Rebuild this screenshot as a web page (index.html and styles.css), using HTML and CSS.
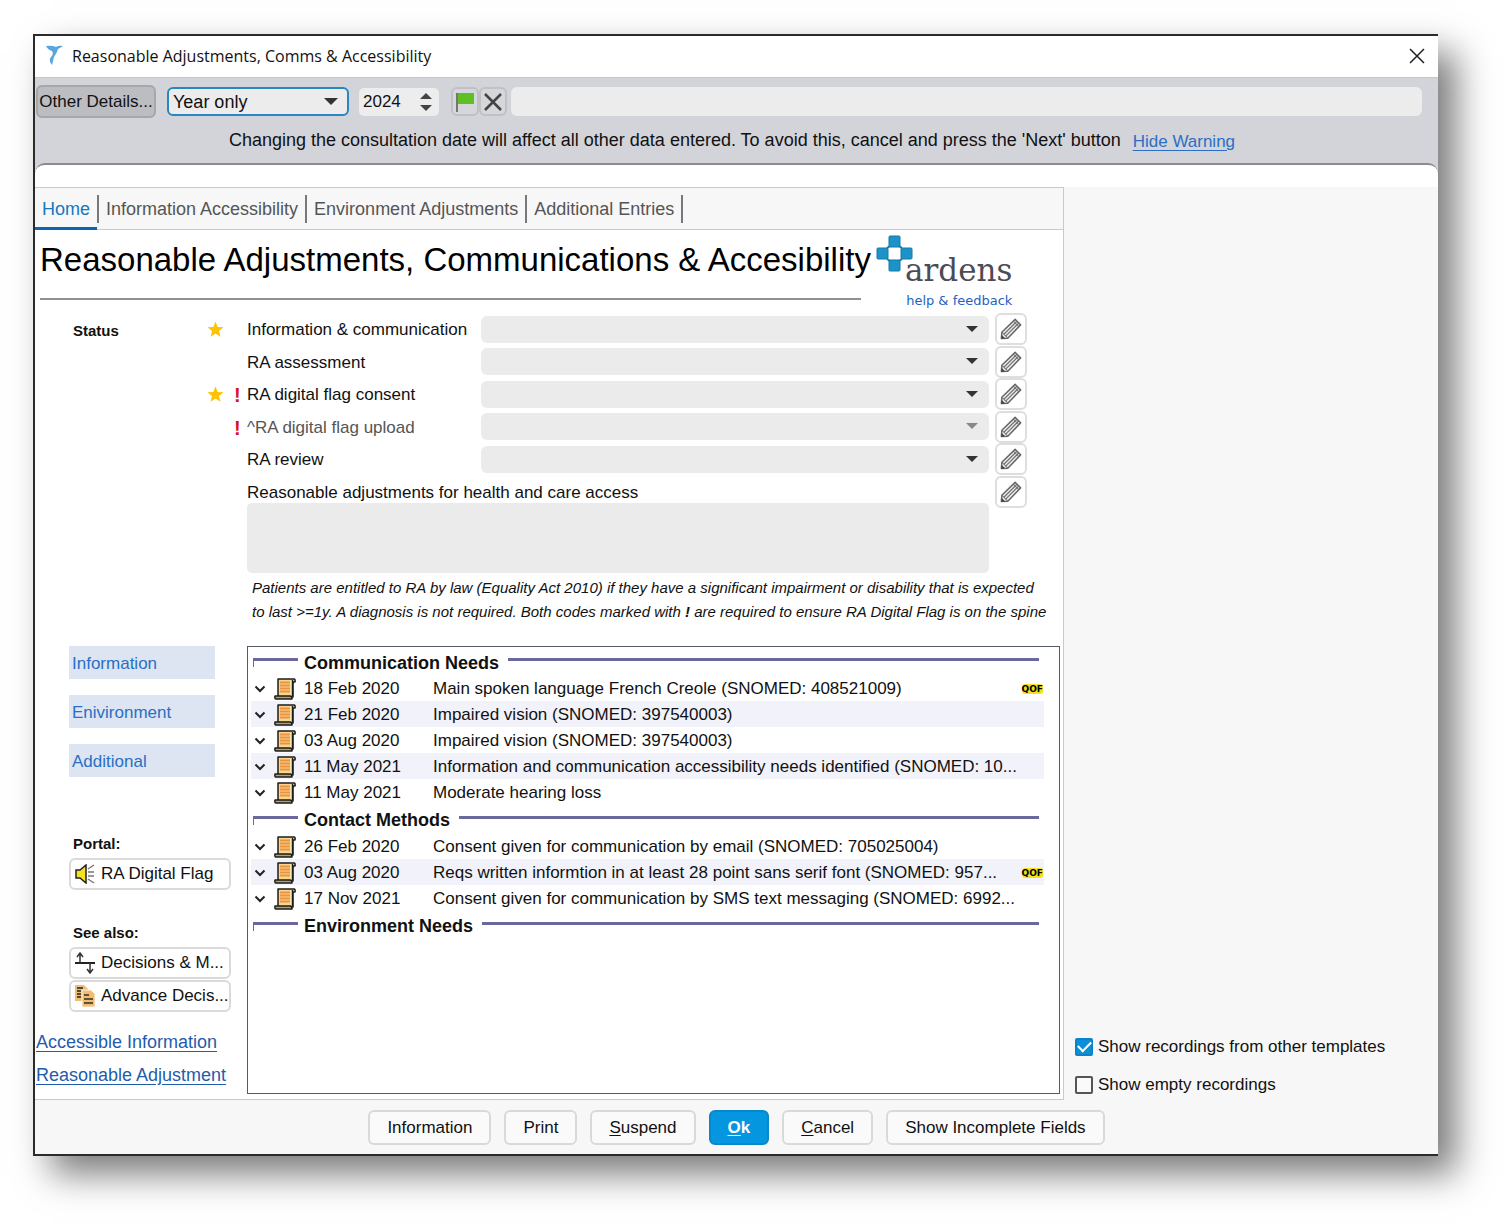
FILE: index.html
```html
<!doctype html>
<html lang="en">
<head>
<title>Reasonable Adjustments, Comms &amp; Accessibility</title>
<meta charset="utf-8">
<meta name="viewport" content="width=device-width, initial-scale=1">
<link rel="stylesheet" href="styles.css">
</head>
<body>

<!-- shared icons -->
<svg class="defs" width="0" height="0" aria-hidden="true">
	<symbol id="pencil" viewBox="0 0 24 24">
		<path d="M1.500 22.500 L2 15.500 L16.500 1.500 L22.500 7.500 L8.500 22 Z" fill="#f0f0f0" stroke="#666" stroke-width="1.600" stroke-linejoin="round"/>
		<path d="M4.500 17.500 L18.500 3.500 M6.500 19.500 L20.500 5.500" fill="none" stroke="#777" stroke-width="1.500"/>
		<path d="M2 15.500 L8.500 22 M14.500 3.500 L20.500 9.500" fill="none" stroke="#777" stroke-width="1.200"/>
		<path d="M1.500 22.500 L2 18.500 L5.500 22 Z" fill="#444"/>
	</symbol>
	<symbol id="star" viewBox="0 0 18 18">
		<path d="M9 0.500 L11.300 6.300 L17.500 6.700 L12.700 10.600 L14.300 16.700 L9 13.300 L3.700 16.700 L5.300 10.600 L0.500 6.700 L6.700 6.300 Z" fill="#fcc203"/>
	</symbol>
	<symbol id="chev" viewBox="0 0 12 8">
		<path d="M1.500 1.500 L6 6 L10.500 1.500" fill="none" stroke="#222" stroke-width="2"/>
	</symbol>
	<symbol id="scroll" viewBox="0 0 22 22">
		<path d="M4 1 H20 Q21.500 1 21 4 H19 V19 H4 Z" fill="#f6d58c" stroke="#1c1c1c" stroke-width="1.500" stroke-linejoin="round"/>
		<path d="M1 18 H16 Q18 18 18 21 H2 Q0.500 21 1 18 Z" fill="#b8a261" stroke="#1c1c1c" stroke-width="1.500" stroke-linejoin="round"/>
		<path d="M6 4.500 H16 M6 7.500 H16 M6 10.500 H16 M6 13.500 H16" stroke="#ee9140" stroke-width="1.800"/>
		<path d="M18.500 2 V18" stroke="#1c1c1c" stroke-width="1.300"/>
		<path d="M16.500 2.500 V17" stroke="#f9e6ad" stroke-width="1"/>
	</symbol>
</svg>

<main class="window">

	<header class="titlebar">
		<svg width="19" height="21" viewBox="0 0 19 21" aria-hidden="true">
			<path d="M1 1 Q7 0 11 2 Q14 0 18 1 Q15 3 13 4 Q12 8 9 12 Q8 16 7 20 Q3 15 6 12 Q9 9 7 6 Q3 5 1 1 Z" fill="#5aa5de"/>
		</svg>
		<span class="caption">Reasonable Adjustments, Comms &amp; Accessibility</span>
		<button class="close" aria-label="Close">
			<svg width="16" height="16" viewBox="0 0 16 16"><path d="M1 1 L15 15 M15 1 L1 15" stroke="#222" stroke-width="1.500"/></svg>
		</button>
	</header>

	<section class="toolbar">
		<div class="tools">
			<button class="details">Other Details...</button>
			<div class="combo dateType">
				<select aria-label="Date precision"><option>Year only</option></select>
			</div>
			<div class="spinner">
				<input type="text" value="2024" aria-label="Year">
				<div class="arrows">
					<button class="up" aria-label="Year up"></button>
					<button class="down" aria-label="Year down"></button>
				</div>
			</div>
			<div class="pair">
				<button class="tool" aria-label="Flag">
					<svg width="20" height="22" viewBox="0 0 20 22"><path d="M2 2 V21" stroke="#555" stroke-width="1.500"/><rect x="3" y="2" width="16" height="11" fill="#5fbf24"/></svg>
				</button>
				<button class="tool" aria-label="Clear">
					<svg width="18" height="18" viewBox="0 0 18 18"><path d="M1 1 L17 17 M17 1 L1 17" stroke="#444" stroke-width="2.500"/></svg>
				</button>
			</div>
			<input class="notes" type="text" aria-label="Consultation notes">
		</div>
		<div class="warning">
			<span>Changing the consultation date will affect all other data entered. To avoid this, cancel and press the 'Next' button</span>
			<a href="#">Hide Warning</a>
		</div>
	</section>

	<div class="workspace">
		<div class="columns">

			<div class="template">
				<nav class="tabs">
					<a class="active" href="#">Home</a>
					<a href="#">Information Accessibility</a>
					<a href="#">Environment Adjustments</a>
					<a href="#">Additional Entries</a>
				</nav>

				<div class="heading">
					<h1>Reasonable Adjustments, Communications &amp; Accesibility</h1>
					<a class="logo" href="#">
						<span class="brand">
							<svg width="37" height="37" viewBox="0 0 37 37" aria-hidden="true">
								<g fill="#1b93c8" stroke="#1679ab" stroke-width="1">
									<rect x="13" y="1" width="11" height="11" rx="1"/>
									<rect x="1" y="13" width="11" height="11" rx="1"/>
									<rect x="25" y="13" width="11" height="11" rx="1"/>
									<rect x="13" y="25" width="11" height="11" rx="1"/>
								</g>
								<path d="M11 13 L14 11 M23 11 L26 13 M11 24 L14 26 M23 26 L26 24" stroke="#1679ab" stroke-width="2"/>
							</svg>
							<span class="name">ardens</span>
						</span>
						<span class="help">help &amp; feedback</span>
					</a>
				</div>

				<div class="status">
					<b class="group">Status</b>
					<svg class="star"><use href="#star"/></svg>
					<label class="label" for="info">Information &amp; communication</label>
					<div class="combo"><select id="info"><option></option></select></div>
					<button class="edit" aria-label="Edit information"><svg><use href="#pencil"/></svg></button>

					<label class="label" for="assess">RA assessment</label>
					<div class="combo"><select id="assess"><option></option></select></div>
					<button class="edit" aria-label="Edit assessment"><svg><use href="#pencil"/></svg></button>

					<svg class="star"><use href="#star"/></svg>
					<span class="must">!</span>
					<label class="label" for="consent">RA digital flag consent</label>
					<div class="combo"><select id="consent"><option></option></select></div>
					<button class="edit" aria-label="Edit consent"><svg><use href="#pencil"/></svg></button>

					<span class="must">!</span>
					<label class="label off" for="upload">^RA digital flag upload</label>
					<div class="combo off"><select id="upload" disabled><option></option></select></div>
					<button class="edit" aria-label="Edit upload"><svg><use href="#pencil"/></svg></button>

					<label class="label" for="review">RA review</label>
					<div class="combo"><select id="review"><option></option></select></div>
					<button class="edit" aria-label="Edit review"><svg><use href="#pencil"/></svg></button>

					<label class="label" for="access">Reasonable adjustments for health and care access</label>
					<button class="edit" aria-label="Edit adjustments"><svg><use href="#pencil"/></svg></button>
				</div>

				<div class="access">
					<textarea id="access"></textarea>
					<p>Patients are entitled to RA by law (Equality Act 2010) if they have a significant impairment or disability that is expected<br>
					to last &gt;=1y. A diagnosis is not required. Both codes marked with <b>!</b> are required to ensure RA Digital Flag is on the spine</p>
				</div>

				<div class="lower">
					<aside class="side">
						<nav class="jump">
							<a href="#">Information</a>
							<a href="#">Enivironment</a>
							<a href="#">Additional</a>
						</nav>

						<b class="group portal">Portal:</b>
						<button class="wideBtn">
							<svg width="20" height="20" viewBox="0 0 20 20"><path d="M1 6 H5 L11 1 V19 L5 14 H1 Z" fill="#f5e220" stroke="#222" stroke-width="1.500"/><path d="M13 5 L19 1 M13 8 H19 M13 12 H19 M13 15 L19 19" stroke="#777" stroke-width="1.400"/></svg>
							RA Digital Flag
						</button>

						<b class="group also">See also:</b>
						<button class="wideBtn">
							<svg width="20" height="22" viewBox="0 0 20 22"><path d="M0 11 H20" stroke="#222" stroke-width="2"/><path d="M5 11 V2 M2 5 L5 1 L8 5 M15 11 V20 M12 17 L15 21 L18 17" fill="none" stroke="#333" stroke-width="1.500"/></svg>
							Decisions &amp; M...
						</button>
						<button class="wideBtn">
							<svg width="20" height="22" viewBox="0 0 20 22"><path d="M0 0 H9 L13 4 V16 H0 Z" fill="#f1bd74"/><path d="M2 3 H8 M2 6 H6 M2 9 H6 M2 12 H6" stroke="#222" stroke-width="1.500"/><path d="M7 5 H16 L20 9 V22 H7 Z" fill="#f1bd74" stroke="#fff" stroke-width="0.800"/><path d="M9 10 H14 M9 14 H18 M9 18 H18" stroke="#3a2c18" stroke-width="1.700"/></svg>
							Advance Decis...
						</button>

						<div class="links">
							<a href="#">Accessible Information</a>
							<a href="#">Reasonable Adjustment</a>
						</div>
					</aside>

					<div class="records">
						<table>
							<colgroup><col class="c1"><col class="c2"><col class="c3"><col></colgroup>
							<tbody>
								<tr><th colspan="4"><div class="rule">Communication Needs</div></th></tr>
								<tr><td><svg class="chev"><use href="#chev"/></svg></td><td><svg class="scroll"><use href="#scroll"/></svg></td><td>18 Feb 2020</td><td><div class="entry">Main spoken language French Creole (SNOMED: 408521009)<mark>QOF</mark></div></td></tr>
								<tr class="alt"><td><svg class="chev"><use href="#chev"/></svg></td><td><svg class="scroll"><use href="#scroll"/></svg></td><td>21 Feb 2020</td><td>Impaired vision (SNOMED: 397540003)</td></tr>
								<tr><td><svg class="chev"><use href="#chev"/></svg></td><td><svg class="scroll"><use href="#scroll"/></svg></td><td>03 Aug 2020</td><td>Impaired vision (SNOMED: 397540003)</td></tr>
								<tr class="alt"><td><svg class="chev"><use href="#chev"/></svg></td><td><svg class="scroll"><use href="#scroll"/></svg></td><td>11 May 2021</td><td>Information and communication accessibility needs identified (SNOMED: 10...</td></tr>
								<tr><td><svg class="chev"><use href="#chev"/></svg></td><td><svg class="scroll"><use href="#scroll"/></svg></td><td>11 May 2021</td><td>Moderate hearing loss</td></tr>
							</tbody>
							<tbody>
								<tr><th colspan="4"><div class="rule">Contact Methods</div></th></tr>
								<tr><td><svg class="chev"><use href="#chev"/></svg></td><td><svg class="scroll"><use href="#scroll"/></svg></td><td>26 Feb 2020</td><td>Consent given for communication by email (SNOMED: 705025004)</td></tr>
								<tr class="alt"><td><svg class="chev"><use href="#chev"/></svg></td><td><svg class="scroll"><use href="#scroll"/></svg></td><td>03 Aug 2020</td><td><div class="entry">Reqs written informtion in at least 28 point sans serif font (SNOMED: 957...<mark>QOF</mark></div></td></tr>
								<tr><td><svg class="chev"><use href="#chev"/></svg></td><td><svg class="scroll"><use href="#scroll"/></svg></td><td>17 Nov 2021</td><td>Consent given for communication by SMS text messaging (SNOMED: 6992...</td></tr>
							</tbody>
							<tbody>
								<tr><th colspan="4"><div class="rule">Environment Needs</div></th></tr>
							</tbody>
						</table>
					</div>
				</div>
			</div>

			<aside class="options">
				<label><input type="checkbox" checked>Show recordings from other templates</label>
				<label><input type="checkbox">Show empty recordings</label>
			</aside>
		</div>

		<footer class="actions">
			<button>Information</button>
			<button>Print</button>
			<button><u>S</u>uspend</button>
			<button class="ok"><u>O</u>k</button>
			<button><u>C</u>ancel</button>
			<button>Show Incomplete Fields</button>
		</footer>
	</div>

</main>

</body>
</html>
```
FILE: styles.css
```css
* { margin: 0; padding: 0; box-sizing: border-box; }

body {
	min-height: 100vh;
	padding: 34px 65px 66px 33px;
	display: flex;
	background: #fff;
	color: #111;
	font-family: "Liberation Sans", Arial, sans-serif;
	font-size: 17px;
	line-height: 20px;
}
button, input, select, textarea { font: inherit; color: inherit; }
button { cursor: pointer; }
svg { display: block; flex: none; }
.defs { position: absolute; }

.window {
	flex: 1;
	min-width: 0;
	display: flex;
	flex-direction: column;
	background: #d3d4d9;
	border: 2px solid #2b2b2b;
	border-right: none;
	box-shadow: 18px 18px 34px rgba(0,0,0,0.52);
}

/* title bar */
.titlebar {
	height: 41px;
	padding: 0 13px 2px 10px;
	display: flex;
	align-items: center;
	gap: 8px;
	background: #fff;
}
.caption {
	flex: 1;
	font-family: "Open Sans", "Noto Sans", sans-serif;
	font-size: 16px;
}
.close { background: none; border: none; }

/* date toolbar */
.toolbar {
	height: 86px;
	padding: 7px 16px 0 1px;
	border-top: 1px solid #c6c7cc;
}
.tools { display: flex; align-items: center; }
.details {
	width: 120px;
	height: 33px;
	background: #bcbdc1;
	border: 2px solid #a6a7ab;
	border-radius: 6px;
	white-space: nowrap;
}
.combo { position: relative; }
.combo select {
	display: block;
	width: 100%;
	height: 27px;
	padding: 0 6px;
	appearance: none;
	background: #ebebeb;
	border: none;
	border-radius: 6px;
	opacity: 1;
}
.combo::after {
	content: "";
	position: absolute;
	right: 11px;
	top: 10px;
	border: 6px solid transparent;
	border-top-color: #333;
	border-bottom: none;
	pointer-events: none;
}
.combo.off::after { border-top-color: #888; }
.dateType { width: 182px; margin-left: 11px; }
.dateType select {
	height: 29px;
	padding: 0 4px;
	background: #ececec;
	border: 2px solid #2a86c0;
	font-size: 18px;
}
.dateType::after { top: 11px; border-width: 7px; border-bottom: none; }
.spinner {
	width: 80px;
	height: 28px;
	margin-left: 10px;
	padding: 0 7px 0 4px;
	display: flex;
	align-items: center;
	justify-content: space-between;
	background: #ededed;
	border-radius: 5px;
}
.spinner input { width: 48px; background: none; border: none; }
.arrows { display: flex; flex-direction: column; gap: 6px; }
.arrows button {
	width: 12px;
	background: none;
	border: 6px solid transparent;
}
.arrows .up { border-top: none; border-bottom-color: #444; }
.arrows .down { border-bottom: none; border-top-color: #444; }
.pair { display: flex; margin-left: 12px; }
.tool {
	width: 28px;
	height: 29px;
	display: flex;
	align-items: center;
	justify-content: center;
	background: #d6d7db;
	border: 2px solid #c0c1c5;
	border-radius: 6px;
}
.notes {
	flex: 1;
	min-width: 0;
	height: 29px;
	margin-left: 4px;
	background: #ececec;
	border: none;
	border-radius: 6px;
}
.warning {
	margin-top: 12px;
	padding-left: 6px;
	display: flex;
	justify-content: center;
	gap: 12px;
	font-size: 18px;
}
a { color: #2a6fc4; }
.warning a { font-size: 17px; line-height: 24px; text-underline-offset: 3px; }

/* work area */
.workspace {
	flex: 1;
	display: flex;
	flex-direction: column;
	padding-top: 22px;
	background: #fff;
	border-top: 2px solid #8b8b90;
	border-radius: 10px 10px 0 0;
}
.columns {
	flex: 1;
	display: grid;
	grid-template-columns: minmax(0, 1fr) 374px;
}
.template {
	display: flex;
	flex-direction: column;
	padding-bottom: 5px;
	border: 1px solid #c9cacc;
	border-left: none;
}
.tabs {
	height: 42px;
	display: flex;
	align-items: center;
	background: #f7f7f7;
	border-bottom: 1px solid #c9cacc;
}
.tabs a {
	position: relative;
	padding: 4px 7px;
	border-right: 2px solid #77787a;
	color: #555;
	font-size: 18px;
	text-decoration: none;
	white-space: nowrap;
}
.tabs .active { color: #1479bf; }
.tabs .active::after {
	content: "";
	position: absolute;
	left: 0;
	right: 0;
	bottom: -7px;
	height: 3px;
	background: #0a66b5;
}

.heading {
	height: 83px;
	padding-left: 5px;
	display: flex;
	align-items: flex-start;
}
.heading h1 {
	width: 821px;
	height: 70px;
	border-bottom: 2px solid #909193;
	color: #000;
	font-size: 33px;
	font-weight: normal;
	line-height: 60px;
	white-space: nowrap;
}
.logo {
	display: flex;
	flex-direction: column;
	align-items: flex-end;
	margin-left: 15px;
	padding-top: 5px;
	text-decoration: none;
}
.brand { display: flex; }
.name {
	margin-left: -8px;
	padding-top: 12px;
	color: #4c4c56;
	font-family: "DejaVu Serif", serif;
	font-size: 31px;
	line-height: 46px;
}
.help {
	color: #1e62c0;
	font-family: "DejaVu Sans", sans-serif;
	font-size: 13px;
	line-height: 16px;
}

/* status fields */
.status {
	height: 195px;
	padding: 0 36px 0 38px;
	display: grid;
	grid-template-columns: 134px 27px 13px 234px minmax(0, 1fr) 38px;
	grid-auto-rows: 1fr;
	align-items: center;
}
.group { font-size: 15px; }
.status .group { grid-column: 1; padding-top: 4px; }
.star { grid-column: 2; width: 17px; height: 17px; }
.must {
	grid-column: 3;
	padding-top: 2px;
	color: #d8122a;
	font-size: 20px;
	font-weight: bold;
}
.label { grid-column: 4; padding-top: 2px; white-space: nowrap; }
.label.off { color: #555; }
.status .combo { grid-column: 5; }
.edit {
	grid-column: 6;
	justify-self: end;
	width: 32px;
	height: 32px;
	display: flex;
	align-items: center;
	justify-content: center;
	background: #fff;
	border: 2px solid #dedede;
	border-radius: 6px;
}
.edit svg { width: 22px; height: 22px; }
.access { margin: -5px 0 0 212px; }
.access textarea {
	display: block;
	width: calc(100% - 74px);
	height: 70px;
	background: #ebebeb;
	border: none;
	border-radius: 5px;
	resize: none;
}
.access p {
	padding: 3px 0 0 5px;
	font-size: 15px;
	font-style: italic;
	line-height: 24px;
	white-space: nowrap;
}

/* links and recordings */
.lower {
	flex: 1;
	margin-top: 22px;
	padding-right: 3px;
	display: grid;
	grid-template-columns: 212px minmax(0, 1fr);
}
.side { padding-left: 34px; }
.jump { display: flex; flex-direction: column; gap: 16px; }
.jump a {
	width: 146px;
	padding: 2px 0 0 3px;
	background: #dce5f1;
	line-height: 31px;
	text-decoration: none;
}
.side .group { display: block; padding: 0 4px 4px; }
.side .portal { margin-top: 57px; }
.side .also { margin-top: 33px; }
.wideBtn {
	width: 162px;
	height: 32px;
	padding: 0 4px;
	display: flex;
	align-items: center;
	gap: 6px;
	background: #fff;
	border: 2px solid #dadada;
	border-radius: 6px;
	white-space: nowrap;
}
.wideBtn + .wideBtn { margin-top: 1px; }
.links {
	margin: 14px 0 0 -33px;
	display: flex;
	flex-direction: column;
	font-size: 18px;
	line-height: 33px;
}
.links a { color: #1f5cab; text-underline-offset: 3px; white-space: nowrap; }

.records {
	padding: 1px 15px 0 3px;
	border: 1px solid #555a68;
}
.records table {
	width: 100%;
	table-layout: fixed;
	border-collapse: collapse;
}
.c1 { width: 23px; }
.c2 { width: 30px; }
.c3 { width: 129px; }
.records td { height: 26px; padding-top: 1px; white-space: nowrap; }
.records th { height: 27px; }
.records tbody + tbody th { height: 28px; }
.alt { background: #f2f2fb; }
.chev { width: 14px; height: 8px; margin-left: 2px; }
.scroll { width: 22px; height: 22px; }
.entry { display: flex; align-items: center; justify-content: space-between; }
.rule {
	display: flex;
	align-items: center;
	gap: 6px;
	padding: 2px 5px 0 2px;
	font-size: 18px;
}
.rule::before, .rule::after {
	content: "";
	width: 44px;
	height: 6px;
	border-top: 3px solid #6b689a;
	border-left: 1px solid #6b689a;
}
.rule::after { flex: 1; margin-left: 3px; border-left: none; }
mark {
	margin-right: 1px;
	background: #f4e11c;
	border-radius: 3px;
	font-family: "DejaVu Sans", sans-serif;
	font-size: 9px;
	font-weight: bold;
	line-height: 10px;
}

.options {
	padding: 0 0 5px 11px;
	display: flex;
	flex-direction: column;
	justify-content: flex-end;
	gap: 18px;
	background: #f7f7f7;
}
.options label { display: flex; align-items: center; gap: 5px; }
.options input {
	width: 18px;
	height: 18px;
	appearance: none;
	background: #fafafa;
	border: 2px solid #555;
	border-radius: 2px;
}
.options input:checked {
	display: grid;
	place-items: center;
	background: #0b8fd8;
	border-color: #0b83c8;
}
.options input:checked::after {
	content: "";
	width: 11px;
	height: 6px;
	margin-bottom: 4px;
	border: solid #fff;
	border-width: 0 0 2px 2px;
	transform: rotate(-45deg);
}

.actions {
	padding: 10px 0 9px;
	display: flex;
	justify-content: center;
	gap: 13px;
	background: #f7f7f7;
}
.actions button {
	height: 35px;
	padding: 0 17px;
	background: #fafafa;
	border: 2px solid #d9d9d9;
	border-radius: 6px;
}
.actions u { text-underline-offset: 2px; }
.actions .ok {
	background: #0596e0;
	border-color: #0787cc;
	color: #fff;
	font-weight: bold;
}
```
